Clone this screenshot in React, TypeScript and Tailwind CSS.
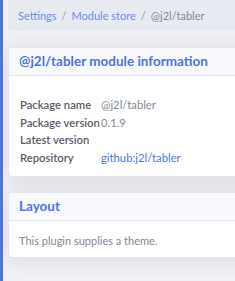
export default function App() {
  const rows = [
    { label: "Package name", value: "@j2l/tabler" },
    { label: "Package version", value: "0.1.9" },
    { label: "Latest version", value: "" },
    { label: "Repository", value: "github:j2l/tabler", link: true },
  ];

  return (
    <div
      className="w-[235px] h-[281px] overflow-hidden bg-[#f0f1f6] border-l-[3px] border-[#4e73df] flex"
      style={{ fontFamily: 'Lato, "Noto Sans", sans-serif' }}
    >
      <div className="w-[260px] shrink-0 flex flex-col pl-[5px]">
        <nav className="h-[31px] pt-[2px] rounded-[4px] bg-[#e8eaf2] flex items-center pl-[10px] text-[11px] text-[#858796]">
          <a className="text-[#6d8be6]">Settings</a>
          <span className="px-[5px] text-[#9a9cab]">/</span>
          <a className="text-[#6d8be6]">Module store</a>
          <span className="px-[5px] text-[#9a9cab]">/</span>
          <span>@j2l/tabler</span>
        </nav>

        <section className="mt-[16px] h-[130px] rounded-[4px] bg-white border border-[#e3e6f0] shadow-[0_2px_20px_0_rgba(58,59,69,0.12)] flex flex-col">
          <header className="h-[28px] shrink-0 bg-[#f8f9fc] border-b border-[#e3e6f0] flex items-center pl-[10px] rounded-t-[4px]">
            <h2 className="text-[13.5px] font-bold text-[#4e73df] leading-none whitespace-nowrap">
              @j2l/tabler module information
            </h2>
          </header>
          <div className="pt-[21px] pl-[11px] grid grid-cols-[81px_1fr] auto-rows-[17.5px] items-center text-[11.25px]">
            {rows.map((r) => (
              <div key={r.label} className="contents">
                <span className="font-semibold text-[#5a5c69] whitespace-nowrap">{r.label}</span>
                <span className={r.link ? "text-[#4e73df]" : "text-[#858796]"}>{r.value}</span>
              </div>
            ))}
          </div>
        </section>

        <section className="mt-[15px] h-[66px] rounded-[4px] bg-white border border-[#e3e6f0] shadow-[0_2px_20px_0_rgba(58,59,69,0.12)] flex flex-col">
          <header className="h-[28px] shrink-0 bg-[#f8f9fc] border-b border-[#e3e6f0] flex items-center pl-[10px] rounded-t-[4px]">
            <h2 className="text-[13.5px] font-bold text-[#4e73df] leading-none">Layout</h2>
          </header>
          <p className="pl-[10px] pt-[12px] text-[11px] text-[#858796]">This plugin supplies a theme.</p>
        </section>
      </div>
    </div>
  );
}
